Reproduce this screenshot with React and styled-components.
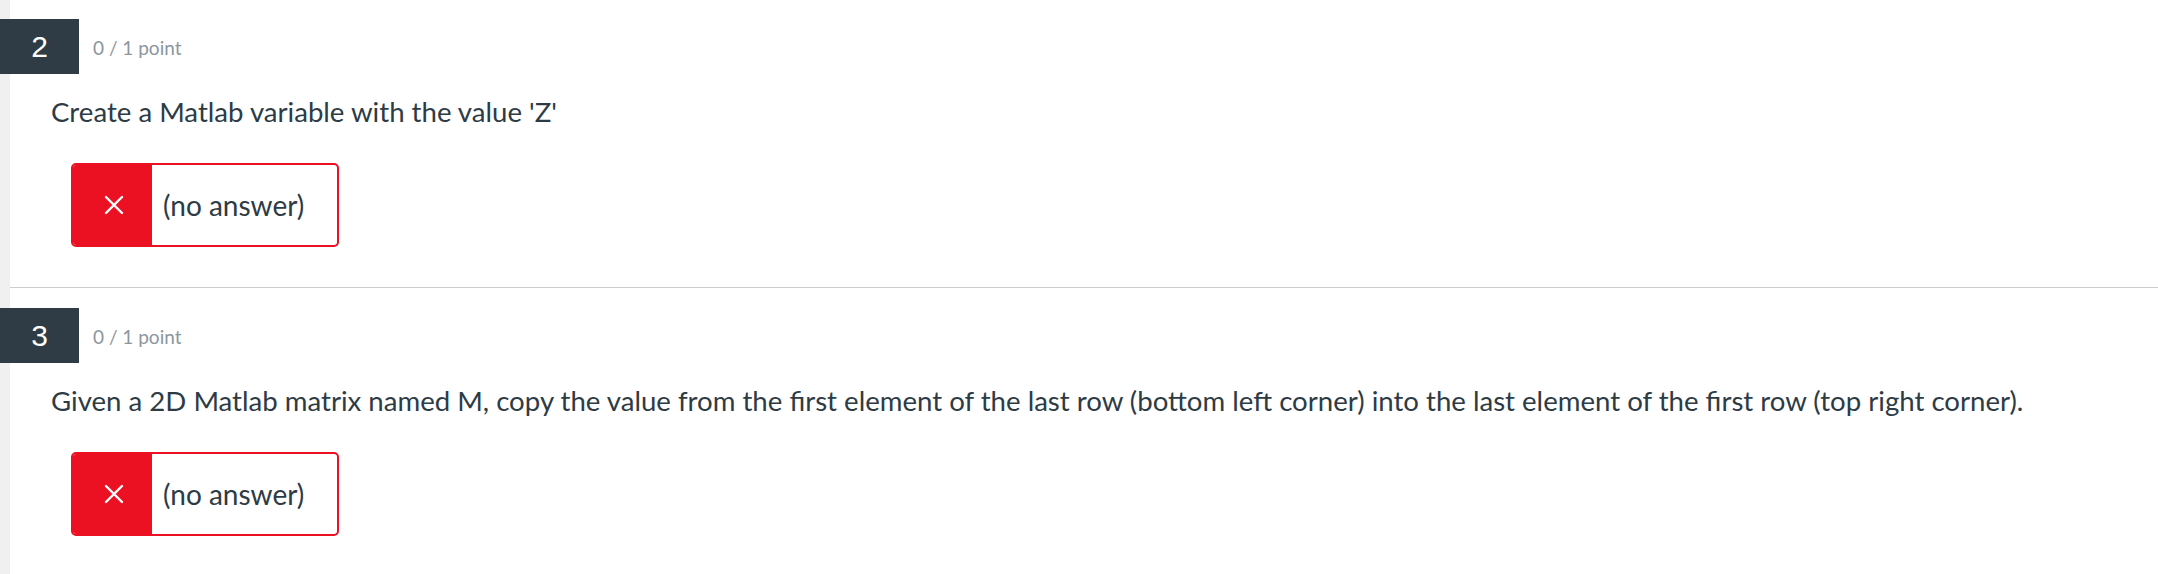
import React from 'react'
import styled, { createGlobalStyle } from 'styled-components'

const GlobalStyle = createGlobalStyle`
  html, body {
    margin: 0;
    padding: 0;
    background: #ffffff;
  }
  body {
    font-family: Lato, "Open Sans", sans-serif;
    color: #2d3b45;
  }
`

const Page = styled.div`
  min-height: 574px;
  background: linear-gradient(to right, #f0f0f0 10px, #ffffff 10px);
`

const Section = styled.section`
  margin-left: 10px;
  padding-top: ${props => (props.$first ? '19px' : '20px')};
  padding-bottom: 40px;
  border-bottom: ${props => (props.$last ? 'none' : '1px solid #cdcdcd')};
`

const Header = styled.div`
  display: flex;
  align-items: center;
  gap: 14px;
`

const Badge = styled.div`
  margin-left: -10px;
  width: 79px;
  height: 55px;
  background: #2f3c45;
  color: #ffffff;
  display: flex;
  align-items: center;
  justify-content: center;
  font-family: "Liberation Sans", Arial, sans-serif;
  font-size: 30px;
`

const Points = styled.span`
  font-size: 19px;
  color: #8b969e;
  padding-top: 2px;
`

const Question = styled.p`
  margin: 21px 0 0;
  padding-left: 41px;
  font-size: 27.6px;
  line-height: 1.2;
  color: #2d3b45;
`

const Answer = styled.div`
  margin: 35px 0 0 61px;
  display: inline-flex;
  align-items: stretch;
  height: 84px;
  box-sizing: border-box;
  border: 2px solid #eb1123;
  border-radius: 5px;
  overflow: hidden;
`

const Mark = styled.div`
  width: 79px;
  background: #eb1123;
  display: flex;
  align-items: center;
  justify-content: center;
  padding-left: 3px;
  box-sizing: border-box;
`

const AnswerText = styled.div`
  display: flex;
  align-items: center;
  padding: 0 33px 0 11px;
  font-size: 28px;
  color: #2d3b45;
`

const Cross = () => (
  <svg width="20" height="20" viewBox="0 0 20 20">
    <path d="M2 2 L18 18 M18 2 L2 18" stroke="#ffffff" strokeWidth="2.4" strokeLinecap="round" />
  </svg>
)

const questions = [
  { num: 2, text: "Create a Matlab variable with the value 'Z'" },
  {
    num: 3,
    text:
      'Given a 2D Matlab matrix named M, copy the value from the first element of the last row (bottom left corner) into the last element of the first row (top right corner).',
  },
]

const App = () => {
  return (
    <>
      <GlobalStyle />
      <Page>
        {questions.map((q, i) => (
          <Section key={q.num} $first={i === 0} $last={i === questions.length - 1}>
            <Header>
              <Badge>{q.num}</Badge>
              <Points>0 / 1 point</Points>
            </Header>
            <Question>{q.text}</Question>
            <Answer>
              <Mark>
                <Cross />
              </Mark>
              <AnswerText>(no answer)</AnswerText>
            </Answer>
          </Section>
        ))}
      </Page>
    </>
  )
}

export default App
